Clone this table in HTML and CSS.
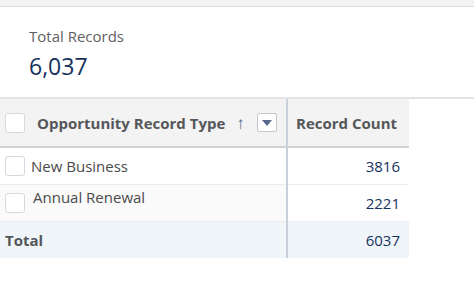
FILE: index.html
```html
<!DOCTYPE html>
<html lang="en">
<head>
    <meta charset="UTF-8">
    <title>Report Summary</title>
    <link rel="stylesheet" href="styles.css">
</head>
<body>
    <div class="topbar"></div>
    <div class="summary">
        <div class="summary-label">Total Records</div>
        <div class="summary-value">6,037</div>
    </div>
    <table class="report-table">
        <colgroup>
            <col class="w-type">
            <col class="w-count">
        </colgroup>
        <thead>
            <tr>
                <th class="col-type">
                    <div class="head-cell">
                        <span class="check"></span>
                        <span class="head-text">Opportunity Record Type</span>
                        <span class="sort-arrow">&uarr;</span>
                        <span class="menu-btn">
                            <svg width="10" height="6" viewBox="0 0 10 6"><path d="M0 0h10L5 6z" fill="#54698d"/></svg>
                        </span>
                    </div>
                </th>
                <th class="col-count">Record Count</th>
            </tr>
        </thead>
        <tbody>
            <tr>
                <td class="col-type"><div class="row-cell"><span class="check"></span><span class="row-text">New Business</span></div></td>
                <td class="col-count num">3816</td>
            </tr>
            <tr class="row-hover">
                <td class="col-type"><div class="row-cell"><span class="check"></span><span class="row-text raised">Annual Renewal</span></div></td>
                <td class="col-count num">2221</td>
            </tr>
        </tbody>
        <tfoot>
            <tr class="total-row">
                <td class="col-type">Total</td>
                <td class="col-count num">6037</td>
            </tr>
        </tfoot>
    </table>
</body>
</html>
```

FILE: styles.css
```css
body {
    font-family: 'Open Sans', Arial, sans-serif;
    background: #fff;
    color: #3e3e3c;
    margin: 0;
}
.topbar {
    height: 6px;
    background: #f4f4f5;
    border-bottom: 1px solid #dcdcde;
}
.summary {
    padding: 18px 29px 0;
    height: 72px;
    border-bottom: 2px solid #e4e4e6;
}
.summary-label {
    font-size: 15px;
    line-height: 22px;
    color: #5f6163;
}
.summary-value {
    font-size: 23px;
    line-height: 30px;
    margin-top: 4px;
    color: #16325c;
}
.report-table {
    width: 409px;
    table-layout: fixed;
    border-collapse: collapse;
    font-size: 15px;
}
.w-type {
    width: 287px;
}
.w-count {
    width: 122px;
}
.report-table th,
.report-table td {
    padding: 0;
    text-align: left;
    white-space: nowrap;
}
.report-table thead th {
    height: 47px;
    background: #f3f3f4;
    border-bottom: 2px solid #cfd2d6;
    font-weight: 700;
    color: #55575a;
}
.col-type {
    border-right: 2px solid #c8d0da;
}
.col-count {
    padding-right: 9px !important;
}
th.col-count {
    padding-left: 8px !important;
}
.num {
    text-align: right !important;
    color: #16325c;
}
.head-cell,
.row-cell {
    display: flex;
    align-items: center;
    padding-left: 5px;
}
.check {
    width: 18px;
    height: 18px;
    border: 1px solid #d8d8da;
    border-radius: 3px;
    background: #fff;
    flex: none;
}
.head-text {
    margin-left: 12px;
}
.sort-arrow {
    margin-left: 11px;
    color: #54698d;
    font-weight: 400;
    font-size: 17px;
    line-height: 1;
}
.menu-btn {
    margin-left: 12px;
    width: 18px;
    height: 17px;
    border: 1px solid #c4c6ca;
    border-radius: 2px;
    background: #fff;
    display: flex;
    align-items: center;
    justify-content: center;
}
.report-table tbody td {
    height: 36px;
    border-bottom: 1px solid #ebebed;
}
.row-hover .col-type {
    background: #fafafb;
}
.row-text {
    margin-left: 6px;
    color: #4a4a4a;
}
.row-text.raised {
    margin-left: 8px;
    position: relative;
    top: -6px;
}
.total-row td {
    height: 36px;
    background: #f0f5fa;
    border-top: 1px solid #c8d0da;
    font-weight: 700;
}
.total-row .col-type {
    padding-left: 5px;
    color: #55575a;
}
.total-row .num {
    font-weight: 400;
}
```
